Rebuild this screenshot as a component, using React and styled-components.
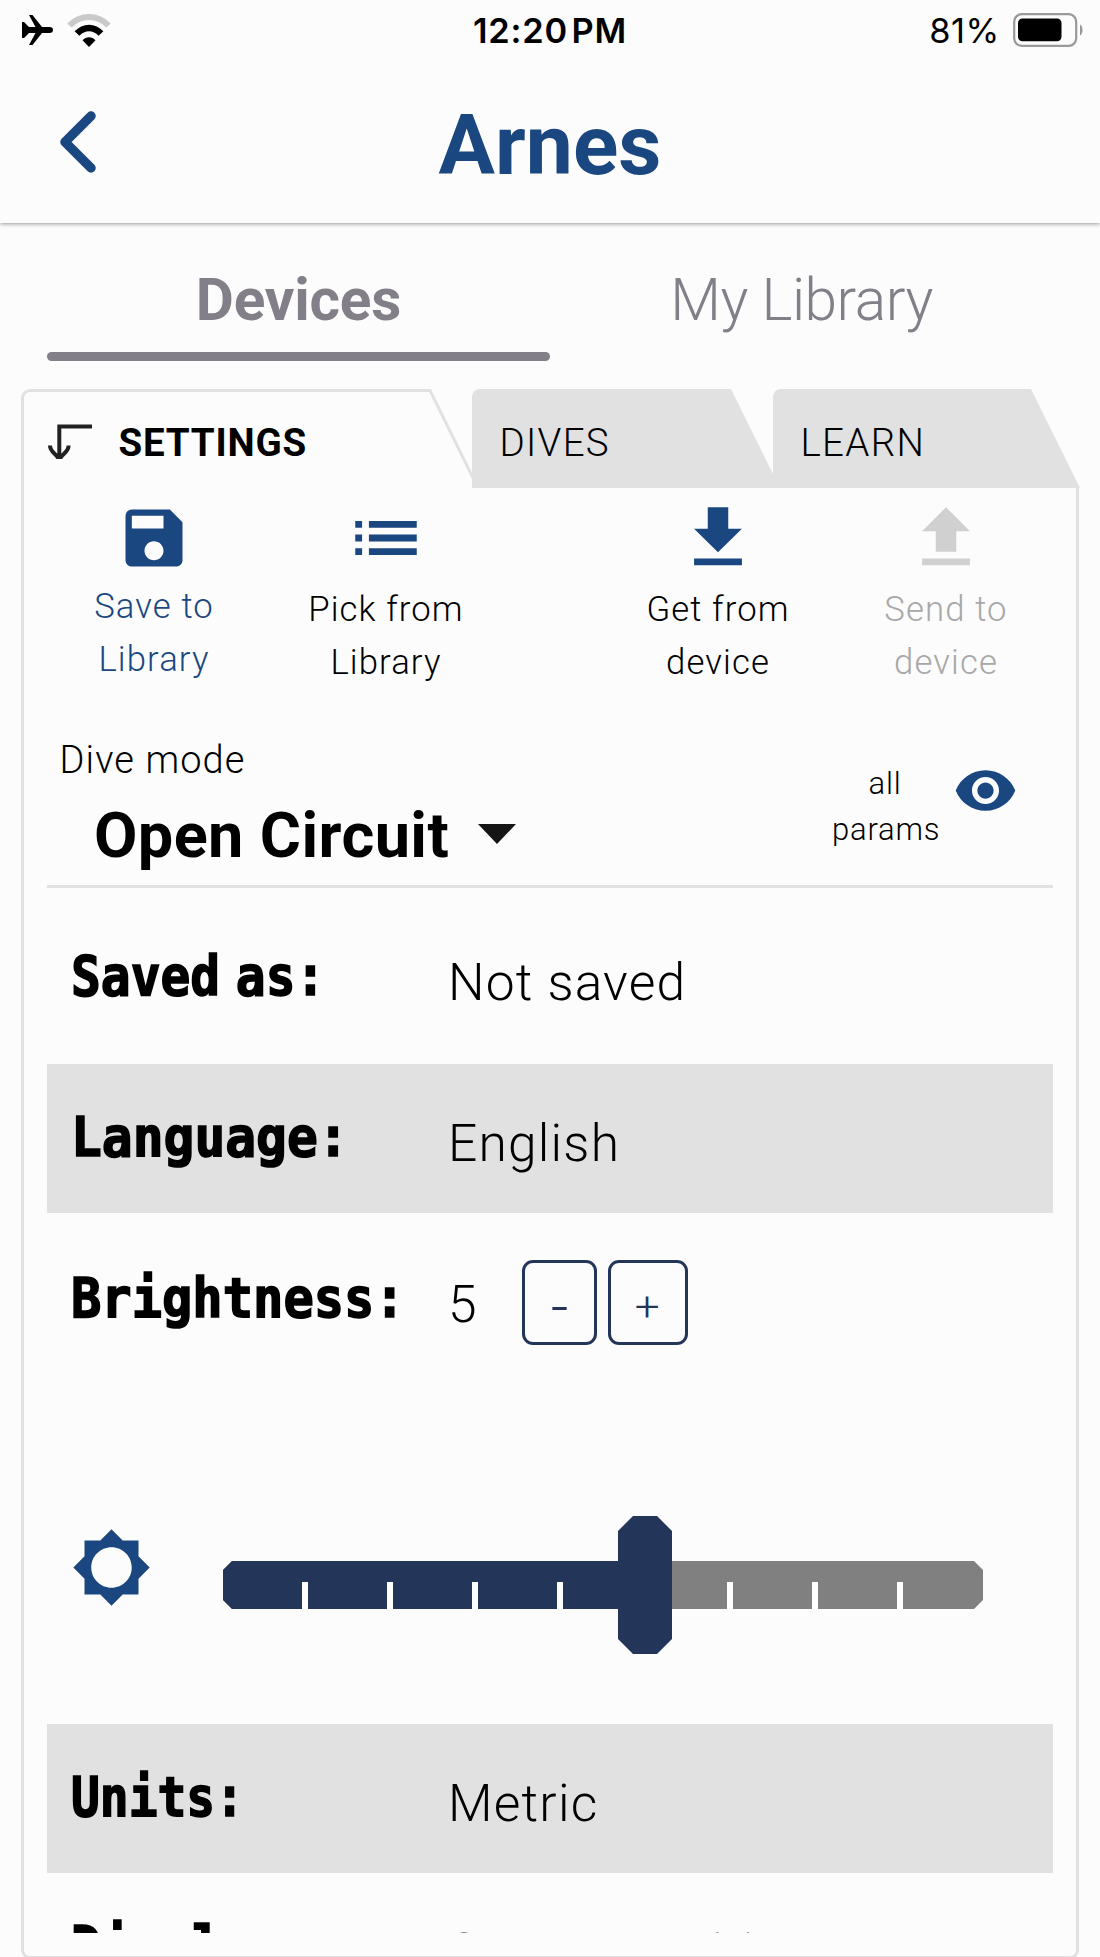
import React, { useState } from 'react'
import styled, { createGlobalStyle } from 'styled-components'
import { MdSave, MdList, MdVisibility, MdBrightness5 } from 'react-icons/md'

const NAVY = '#1a4780'
const DARK = '#233558'
const LINE = '#e1e1e1'

const GlobalStyle = createGlobalStyle`
    * {
        box-sizing: border-box;
    }
    body {
        margin: 0;
        background: #fcfcfc;
        color: #000;
        font-family: Roboto, 'Liberation Sans', sans-serif;
    }
    svg {
        display: block;
    }
`

const Screen = styled.div`
    width: 1100px;
    height: 1957px;
    overflow: hidden;
    display: flex;
    flex-direction: column;
`

/* status bar */

const StatusBar = styled.div`
    height: 60px;
    flex: none;
    padding: 0 17px 0 22px;
    display: grid;
    grid-template-columns: 1fr auto 1fr;
    align-items: center;
    font-family: Inter, sans-serif;
    font-size: 34.4px;
`

const StatusIcons = styled.div`
    display: flex;
    align-items: center;
    gap: 14px;
`

const Clock = styled.div`
    margin-left: -5px;
    font-weight: 600;
    letter-spacing: 0.8px;
    word-spacing: -6px;
`

const Battery = styled.div`
    display: flex;
    justify-content: flex-end;
    align-items: center;
    gap: 13px;
    letter-spacing: 0.6px;
`

/* header */

const Header = styled.header`
    height: 163px;
    flex: none;
    padding: 0 60px;
    display: grid;
    grid-template-columns: 1fr auto 1fr;
    align-items: center;
    box-shadow: 0 1px 4px rgba(0, 0, 0, 0.4);
    clip-path: inset(0 0 -8px 0);
`

const Title = styled.h1`
    margin: 0;
    padding-top: 8px;
    font-size: 84px;
    font-weight: 700;
    line-height: 100px;
    letter-spacing: 0;
    color: ${NAVY};
`

const TopTabs = styled.nav`
    display: grid;
    grid-template-columns: 1fr 1fr;
    margin: 0 47px;
    flex: none;
`

const TopTab = styled.div`
    height: 138px;
    padding-top: 25px;
    line-height: 104px;
    font-size: 58.6px;
    text-align: center;
    color: #827f88;
    font-weight: ${p => (p.$active ? 700 : 300)};
    letter-spacing: ${p => (p.$active ? '-0.2px' : '-0.5px')};

    &::after {
        content: '';
        display: block;
        height: 9px;
        border-radius: 5px;
        background: ${p => (p.$active ? '#827f88' : 'transparent')};
    }
`

/* folder tabs */

const FolderTabs = styled.div`
    display: flex;
    flex: none;
    margin: 28px 20px 0 21px;
    height: 99px;
`

const FolderTab = styled.div`
    width: ${p => p.$width}px;
    margin-right: ${p => p.$overlap || 0}px;
    padding: 9px 0 0 27.5px;
    line-height: 90px;
    font-size: 38.5px;
    font-weight: 300;
    letter-spacing: 1.3px;
    background: ${LINE};
    border-top-left-radius: 8px;
    clip-path: polygon(0 0, calc(100% - 49px) 0, 100% 100%, 0 100%);
`

const ActiveTab = styled.div`
    display: flex;
    width: 451px;
    height: 99px;
`

const ActiveTabBody = styled.div`
    flex: 1;
    display: flex;
    padding: 6px 0 0 24px;
    border: 3px solid ${LINE};
    border-width: 3px 0 0 3px;
    border-top-left-radius: 9px;
    line-height: 90px;
    font-size: 38.5px;
    font-weight: 700;
    letter-spacing: 0.8px;

    svg {
        margin: 26px 26.5px 0 0;
    }
`

const Panel = styled.main`
    flex: none;
    height: 1471px;
    margin: 0 21px;
    border: 3px solid ${LINE};
    border-top: 0;
    border-radius: 0 0 9px 9px;
`

const Scroller = styled.div`
    height: 1445px;
    overflow: hidden;
`

/* toolbar */

const Toolbar = styled.div`
    display: flex;
    height: 232px;
    padding-left: 40px;
`

const Tool = styled.div`
    width: 180px;
    margin-left: ${p => p.$gap || 0}px;
    padding-top: ${p => p.$top || 9}px;
    display: flex;
    flex-direction: column;
    align-items: center;
    gap: 4px;
    color: ${p => p.$icon || NAVY};
`

const ToolLabel = styled.div`
    color: ${p => p.$color || '#000'};
    font-size: 34.7px;
    font-weight: 300;
    line-height: 53px;
    letter-spacing: 1.1px;
    text-align: center;
    white-space: pre-line;
`

/* dive mode */

const ModeBar = styled.div`
    display: flex;
    justify-content: space-between;
    height: 168px;
    margin: 0 23px;
    padding: 17px 35px 0 12.5px;
    border-bottom: 3px solid ${LINE};
`

const ModeLabel = styled.div`
    font-size: 38px;
    font-weight: 300;
    line-height: 46px;
    letter-spacing: 1.1px;
`

const ModeSelect = styled.div`
    display: flex;
    align-items: center;
    gap: 29px;
    margin: 16px 0 0 34.5px;
    font-size: 63px;
    font-weight: 700;
    line-height: 74px;
    letter-spacing: 0.4px;

    svg {
        margin-bottom: 5px;
    }
`

const ParamsToggle = styled.div`
    display: flex;
    align-items: flex-start;
    gap: 15px;
    padding-top: 21px;
    color: ${NAVY};
`

const ParamsLabel = styled.div`
    width: 106px;
    padding-top: 3px;
    color: #000;
    font-size: 31px;
    font-weight: 300;
    line-height: 46.3px;
    letter-spacing: 0.8px;
    text-align: center;
`

/* settings rows */

const Rows = styled.div`
    margin: 15px 23px 0;
`

const Row = styled.div`
    display: flex;
    height: 149px;
    margin-bottom: ${p => (p.$flush ? 0 : 12)}px;
    background: ${p => (p.$shaded ? LINE : 'transparent')};
`

const RowLabel = styled.div`
    width: 401px;
    padding-left: 23.5px;
    line-height: 146px;
    font-family: 'DejaVu Sans Mono', 'Liberation Mono', monospace;
    font-size: 56px;
    font-weight: 700;
    white-space: nowrap;
    -webkit-text-stroke: 1.6px #000;

    span {
        display: inline-block;
        transform: scaleX(${p => p.$stretch || 0.9});
        transform-origin: left;
        word-spacing: -16px;
    }
`

const RowValue = styled.div`
    padding-top: 9px;
    line-height: 141px;
    font-size: 51.5px;
    font-weight: 300;
    letter-spacing: 1.2px;
`

const Stepper = styled.div`
    display: flex;
    gap: 11px;
    margin: 35px 0 0 44px;
`

const StepButton = styled.button`
    width: ${p => p.$width}px;
    height: 85px;
    padding: 9px 0 0;
    border: 3px solid ${DARK};
    border-radius: 11px;
    background: transparent;
    color: ${DARK};
    font-family: inherit;
    font-size: 40px;
    font-weight: ${p => p.$weight || 300};

    span {
        display: inline-block;
        transform: scaleX(${p => p.$stretch || 1});
    }
`

const SliderRow = styled.div`
    display: flex;
    height: 338px;
    padding: 130px 0 0 24px;
    color: ${NAVY};

    > svg {
        margin: 11px 71px 0 0;
        flex: none;
    }
`

const Slider = styled.div`
    position: relative;
    width: 760px;
    height: 138px;
    padding-top: 45px;
`

const Track = styled.div`
    display: flex;
    height: 48px;
    background: #808080;
    clip-path: polygon(9px 0, calc(100% - 9px) 0, 100% 9px, 100% calc(100% - 9px), calc(100% - 9px) 100%, 9px 100%, 0 calc(100% - 9px), 0 9px);
`

const Fill = styled.div`
    background: ${DARK};
`

const Ticks = styled.div`
    position: absolute;
    top: 66px;
    left: 79px;
    display: flex;
    gap: 79px;
`

const Tick = styled.div`
    width: 6px;
    height: 27px;
    background: #fff;
`

const Thumb = styled.div`
    position: absolute;
    top: 0;
    width: 54px;
    height: 138px;
    margin-left: -27px;
    background: ${DARK};
    clip-path: polygon(15px 0, 39px 0, 100% 15px, 100% 123px, 39px 100%, 15px 100%, 0 123px, 0 15px);
`

const Setting = ({ label, shaded, flush, stretch, children }) => (
    <Row $shaded={shaded} $flush={flush}>
        <RowLabel $stretch={stretch}><span>{label}</span></RowLabel>
        {children}
    </Row>
)

const Plane = () => (
    <svg width="31" height="30" viewBox="0 0 31 30">
        <path d="M0 7h2l5 5h6.500L7 0h3.500L20 12h7.500q3.500 0 3.500 3t-3.500 3H20L10.500 30H7l6.500-12H7l-5 5H0z" />
    </svg>
)

const Wifi = () => (
    <svg width="44" height="34" viewBox="0 0 44 34">
        <path d="M2.500 12.500C13 1 31 1 41.500 12.500" fill="none" stroke="#c9c9c9" strokeWidth="6" />
        <path d="M10 20.500C17 13 27 13 34 20.500" fill="none" stroke="#000" strokeWidth="6.500" />
        <path d="M22 34l-6.500-6.700c3.500-4 9.500-4 13 0z" />
    </svg>
)

const BatteryIcon = () => (
    <svg width="70" height="34" viewBox="0 0 70 34">
        <rect x="1.200" y="1.200" width="62" height="31.600" rx="7.500" fill="none" stroke="#999" strokeWidth="2.200" />
        <rect x="5" y="5.500" width="43.500" height="22.800" rx="4.500" />
        <path d="M67 11.500c3.400 1.500 3.400 9.500 0 11z" fill="#999" />
    </svg>
)

const Back = () => (
    <svg width="36" height="62" viewBox="0 0 36 62">
        <path d="M31 5L5 31l26 26" fill="none" stroke={NAVY} strokeWidth="9.500" strokeLinecap="round" strokeLinejoin="round" />
    </svg>
)

const DownLeft = () => (
    <svg width="44" height="36" viewBox="0 0 44 36">
        <path d="M44 2.500H11.300V32M2 21.500c0 6 5 7.500 7.500 11.500h3.600c2.500-4 7.500-5.500 7.500-11.500" fill="none" stroke="#222" strokeWidth="4" />
    </svg>
)

const Download = () => (
    <svg width="82" height="82" viewBox="0 0 24 24" fill="currentColor">
        <path d="M19 9.300h-4V3H9v6.300H5l7 6.900 7-6.900zM5 18v2h14v-2H5z" />
    </svg>
)

const Upload = () => (
    <svg width="82" height="82" viewBox="0 0 24 24" fill="currentColor">
        <path d="M9 16h6v-6h4l-7-7-7 7h4zM5 18v2h14v-2z" />
    </svg>
)

const App = () => {
    const [brightness, setBrightness] = useState(5)
    // track is 760px wide, one step is 85px
    const position = (422 + (brightness - 5) * 85) / 7.6

    return (
        <React.Fragment>
            <GlobalStyle />
            <Screen>
                <StatusBar>
                    <StatusIcons>
                        <Plane />
                        <Wifi />
                    </StatusIcons>
                    <Clock>12:20 PM</Clock>
                    <Battery>
                        81%
                        <BatteryIcon />
                    </Battery>
                </StatusBar>
                <Header>
                    <Back />
                    <Title>Arnes</Title>
                </Header>
                <TopTabs>
                    <TopTab $active>Devices</TopTab>
                    <TopTab>My Library</TopTab>
                </TopTabs>
                <FolderTabs>
                    <ActiveTab>
                        <ActiveTabBody>
                            <DownLeft />
                            SETTINGS
                        </ActiveTabBody>
                        <svg width="43" height="99" viewBox="0 0 43 99">
                            <path d="M0 1.500h1L46 93" fill="none" stroke={LINE} strokeWidth="3" />
                        </svg>
                    </ActiveTab>
                    <FolderTab $width={308} $overlap={-7}>DIVES</FolderTab>
                    <FolderTab $width={307}>LEARN</FolderTab>
                </FolderTabs>
                <Panel>
                    <Scroller>
                        <Toolbar>
                            <Tool $top={12}>
                                <MdSave size={76} />
                                <ToolLabel $color={NAVY}>{'Save to\nLibrary'}</ToolLabel>
                            </Tool>
                            <Tool $gap={52}>
                                <MdList size={82} />
                                <ToolLabel>{'Pick from\nLibrary'}</ToolLabel>
                            </Tool>
                            <Tool $gap={152}>
                                <Download />
                                <ToolLabel>{'Get from\ndevice'}</ToolLabel>
                            </Tool>
                            <Tool $gap={48} $icon="#d0d0d0">
                                <Upload />
                                <ToolLabel $color="#a8a8a8">{'Send to\ndevice'}</ToolLabel>
                            </Tool>
                        </Toolbar>
                        <ModeBar>
                            <div>
                                <ModeLabel>Dive mode</ModeLabel>
                                <ModeSelect>
                                    Open Circuit
                                    <svg width="38" height="20" viewBox="0 0 38 20">
                                        <path d="M0 0h38L19 20z" fill="#151515" />
                                    </svg>
                                </ModeSelect>
                            </div>
                            <ParamsToggle>
                                <ParamsLabel>all params</ParamsLabel>
                                <MdVisibility size={65} />
                            </ParamsToggle>
                        </ModeBar>
                        <Rows>
                            <Setting label="Saved as:" stretch={0.885}>
                                <RowValue>Not saved</RowValue>
                            </Setting>
                            <Setting label="Language:" stretch={0.915} shaded>
                                <RowValue>English</RowValue>
                            </Setting>
                            <Setting label="Brightness:" stretch={0.9}>
                                <RowValue>{brightness}</RowValue>
                                <Stepper>
                                    <StepButton $width={75} $stretch={1.5} $weight={400} onClick={() => setBrightness(Math.max(1, brightness - 1))}><span>-</span></StepButton>
                                    <StepButton $width={80} $stretch={1.1} onClick={() => setBrightness(Math.min(9, brightness + 1))}><span>+</span></StepButton>
                                </Stepper>
                            </Setting>
                            <SliderRow>
                                <MdBrightness5 size={81} />
                                <Slider>
                                    <Track>
                                        <Fill style={{ width: `${position}%` }} />
                                    </Track>
                                    <Ticks>
                                        {[1, 2, 3, 4, 5, 6, 7, 8].map(n => <Tick key={n} />)}
                                    </Ticks>
                                    <Thumb style={{ left: `${position}%` }} />
                                </Slider>
                            </SliderRow>
                            <Setting label="Units:" stretch={0.855} shaded flush>
                                <RowValue>Metric</RowValue>
                            </Setting>
                            <Setting label="Display:">
                                <RowValue>Screen position</RowValue>
                            </Setting>
                        </Rows>
                    </Scroller>
                </Panel>
            </Screen>
        </React.Fragment>
    )
}

export default App
